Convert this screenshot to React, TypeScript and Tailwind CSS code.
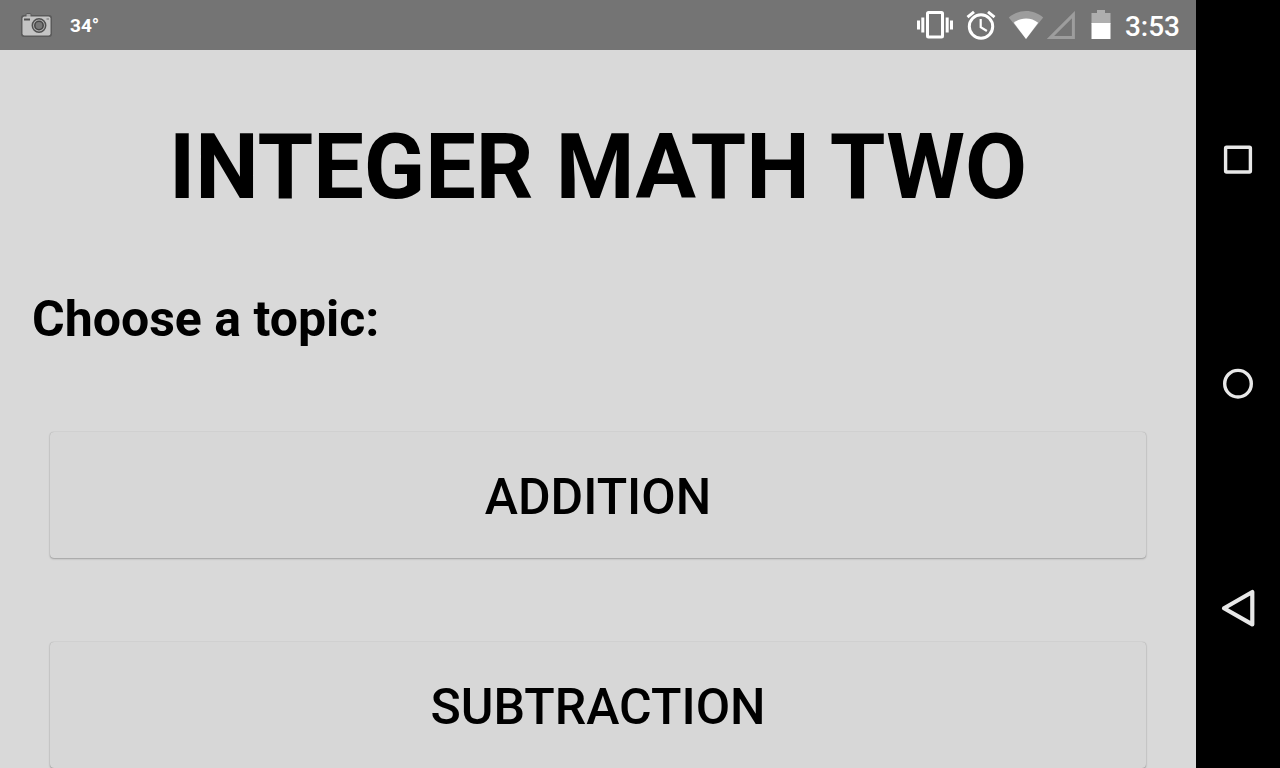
const topics = ['Addition', 'Subtraction']

export default function App() {
  return (
    <div className="flex h-screen overflow-hidden bg-[#d9d9d9] font-['Roboto',sans-serif] text-black">
      <div className="flex min-w-0 flex-1 flex-col">
        <StatusBar />
        <main className="flex-1 px-8">
          <h1 className="mt-[66px] text-center text-[90px] leading-[104px] font-bold">INTEGER MATH TWO</h1>
          <h2 className="mt-[69px] text-[50px] leading-[60px] font-bold">Choose a topic:</h2>
          <div className="mt-[83px] flex flex-col gap-[84px] px-[18px]">
            {topics.map((topic) => (
              <button
                key={topic}
                type="button"
                className="h-[126px] rounded bg-[#d7d7d7] pt-1 text-[50px] leading-[60px] font-medium uppercase shadow-[0_0_1px_rgba(0,0,0,0.25),0_1px_2px_rgba(0,0,0,0.25)]"
              >
                {topic}
              </button>
            ))}
          </div>
        </main>
      </div>
      <NavBar />
    </div>
  )
}

function StatusBar() {
  return (
    <header className="flex h-[50px] shrink-0 items-center justify-between bg-[#747474] pr-4 pl-5 text-white">
      <div className="flex items-center gap-4">
        <CameraIcon />
        <span className="pt-px text-[19px] leading-6 font-bold">34°</span>
      </div>
      <div className="flex items-center">
        <VibrateIcon />
        <AlarmIcon />
        <WifiIcon />
        <SignalIcon />
        <BatteryIcon />
        <span className="ml-[14px] pt-1 text-[28px] leading-8 font-medium">3:53</span>
      </div>
    </header>
  )
}

function NavBar() {
  return (
    <nav className="flex w-[84px] shrink-0 flex-col items-center justify-center gap-44 bg-black text-[#e8e8e8]">
      <button type="button" aria-label="Recent apps" className="size-12">
        <svg viewBox="0 0 48 48" fill="none" stroke="currentColor" strokeWidth="3.4">
          <rect x="11.6" y="11.2" width="24.8" height="24.8" rx="1" />
        </svg>
      </button>
      <button type="button" aria-label="Home" className="size-12">
        <svg viewBox="0 0 48 48" fill="none" stroke="currentColor" strokeWidth="3.4">
          <circle cx="24" cy="23.7" r="13.3" />
        </svg>
      </button>
      <button type="button" aria-label="Back" className="size-12">
        <svg viewBox="0 0 48 48" fill="none" stroke="currentColor" strokeWidth="4.2" strokeLinejoin="round">
          <path d="M10 24.2 38.3 8v32.4z" />
        </svg>
      </button>
    </nav>
  )
}

function CameraIcon() {
  return (
    <svg className="h-[26px] w-[34px]" viewBox="0 0 34 26">
      <rect x="1" y="3" width="31" height="22" rx="3" fill="#5a5a5a" />
      <rect x="6" y="1.5" width="5" height="4" rx="1" fill="#a8a8a8" stroke="#5a5a5a" />
      <rect x="2.5" y="4.5" width="28" height="19" rx="2" fill="#c4c4c4" />
      <rect x="4" y="6.5" width="6" height="2" fill="#505050" />
      <circle cx="19" cy="13.5" r="6.7" fill="#b0b0b0" stroke="#505050" strokeWidth="1.5" />
      <circle cx="19" cy="13.5" r="4.2" fill="#777" stroke="#454545" strokeWidth="1.5" />
      <rect x="26.5" y="6" width="2.5" height="2" fill="#999" />
    </svg>
  )
}

function VibrateIcon() {
  return (
    <svg className="h-[30px] w-9" viewBox="0 0 36 30" fill="currentColor">
      <rect x="10.5" y="2.5" width="15" height="24.5" rx="1" fill="none" stroke="currentColor" strokeWidth="3" />
      <path d="M0 10.5h3v9H0zM4.3 7.5h3v15h-3zM28.7 7.5h3v15h-3zM33 10.5h3v9h-3z" />
    </svg>
  )
}

function AlarmIcon() {
  return (
    <svg className="ml-[13px] h-[30px] w-[30px]" viewBox="0 0 30 30" fill="none" stroke="currentColor" strokeWidth="3">
      <circle cx="15" cy="16.5" r="11.7" />
      <path d="m1.5 7.2 6.5-5.3M28.5 7.2 22 1.9" />
      <path d="M14.7 9v8.2l6.2 3.8" strokeWidth="2.2" />
    </svg>
  )
}

function WifiIcon() {
  return (
    <svg className="ml-3 h-[30px] w-9" viewBox="0 0 36 30">
      <path d="M18 29 .8 7.5C5.5 3.5 11.5 1 18 1s12.5 2.5 17.2 6.5z" fill="#9d9d9d" />
      <path d="M18 29 5.8 12.7C9.3 10 13.500 8.500 18 8.500s8.700 1.500 12.200 4.200z" fill="currentColor" />
    </svg>
  )
}

function SignalIcon() {
  return (
    <svg className="ml-[3px] h-[30px] w-[29px]" viewBox="0 0 29 30" fill="none" stroke="#9d9d9d" strokeWidth="3">
      <path d="M3.5 27.4h22.9V4.6z" />
    </svg>
  )
}

function BatteryIcon() {
  return (
    <svg className="ml-[15px] h-[30px] w-5" viewBox="0 0 20 30">
      <path d="M6 0h8v3h5.5v11H.5V3H6z" fill="#aeaeae" />
      <path d="M.5 13h19v16H.5z" fill="currentColor" />
    </svg>
  )
}
